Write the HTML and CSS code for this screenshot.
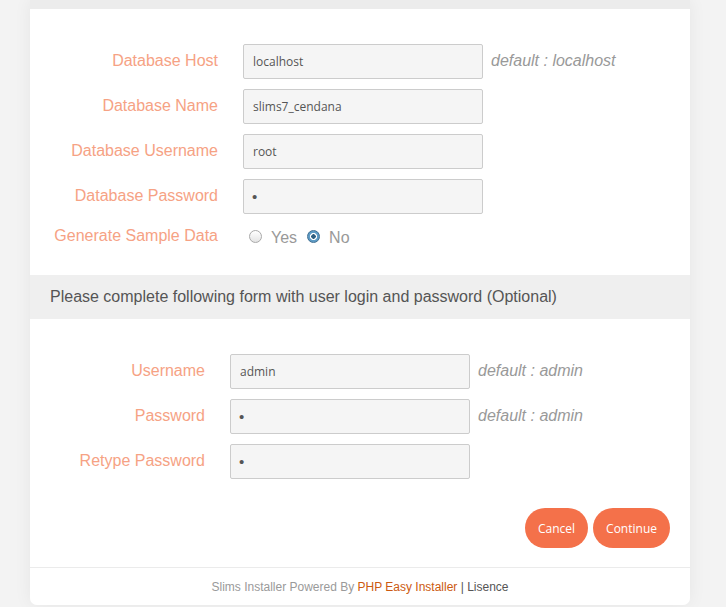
FILE: index.html
```html
<!DOCTYPE html>
<html lang="en">
<head>
<meta charset="utf-8">
<title>Slims Installer</title>
<link rel="stylesheet" href="styles.css">
</head>
<body>
<div class="wrap">
  <div class="top-band"></div>
  <div class="card">
    <div class="form form-db">
      <div class="row">
        <label class="lbl">Database Host</label>
        <input class="field" type="text" value="localhost">
        <span class="hint">default : localhost</span>
      </div>
      <div class="row">
        <label class="lbl">Database Name</label>
        <input class="field" type="text" value="slims7_cendana">
      </div>
      <div class="row">
        <label class="lbl">Database Username</label>
        <input class="field" type="text" value="root">
      </div>
      <div class="row">
        <label class="lbl">Database Password</label>
        <input class="field pw" type="password" value="x">
      </div>
      <div class="row row-radio">
        <label class="lbl">Generate Sample Data</label>
        <div class="radios">
          <span class="radio"></span><span class="rtext">Yes</span>
          <span class="radio checked"></span><span class="rtext">No</span>
        </div>
      </div>
    </div>

    <div class="section-bar">Please complete following form with user login and password (Optional)</div>

    <div class="form form-user">
      <div class="row">
        <label class="lbl">Username</label>
        <input class="field" type="text" value="admin">
        <span class="hint">default : admin</span>
      </div>
      <div class="row">
        <label class="lbl">Password</label>
        <input class="field pw" type="password" value="x">
        <span class="hint">default : admin</span>
      </div>
      <div class="row">
        <label class="lbl">Retype Password</label>
        <input class="field pw" type="password" value="x" autofocus>
      </div>
    </div>

    <div class="actions">
      <button class="btn" type="button">Cancel</button>
      <button class="btn" type="button">Continue</button>
    </div>

    <div class="footer">Slims Installer Powered By <span class="f-link">PHP Easy Installer</span> <span class="f-dark">| Lisence</span></div>
  </div>
</div>
</body>
</html>
```

FILE: styles.css
```css
* { box-sizing: border-box; }

html, body {
  margin: 0;
  padding: 0;
  background: #f3f3f3;
  font-family: "Liberation Sans", Arial, sans-serif;
  height: 607px;
  overflow: hidden;
}

.wrap {
  width: 660px;
  margin-left: 30px;
  box-shadow: 0 0 18px rgba(0, 0, 0, 0.06);
  border-radius: 0 0 7px 7px;
}

.top-band {
  height: 9px;
  background: #ececec;
}

.card {
  background: #fff;
  border-radius: 0 0 7px 7px;
  height: 596px;
  display: flex;
  flex-direction: column;
}

.form {
  display: flex;
  flex-direction: column;
  gap: 10px;
}

.form-db { padding-top: 35px; }
.form-user { padding-top: 35px; }

.row {
  display: flex;
  align-items: center;
  height: 35px;
}

.lbl {
  text-align: right;
  color: #f6a284;
  font-size: 16px;
  margin-right: 25px;
  flex: none;
  position: relative;
  top: -1px;
}

.form-db .lbl { width: 188px; }
.form-user .lbl { width: 175px; }

.field {
  width: 240px;
  height: 35px;
  border: 1px solid #cccccc;
  border-radius: 2px;
  background: #f5f5f5;
  font-family: "Open Sans", sans-serif;
  font-size: 12px;
  color: #555;
  padding: 0 9px;
  margin: 0;
  outline: none;
}

.field.pw {
  font-family: "Liberation Sans", Arial, sans-serif;
  font-size: 15px;
  padding-left: 8px;
}

.field:focus { outline: none; }

.hint {
  margin-left: 8px;
  font-style: italic;
  font-size: 16px;
  color: #999;
  position: relative;
  top: -1px;
}

.row-radio {
  height: 26px;
}

.radios {
  display: flex;
  align-items: center;
  padding-left: 6px;
}

.radio {
  width: 13px;
  height: 13px;
  border-radius: 50%;
  border: 1px solid #a9a9a9;
  background: linear-gradient(#ffffff, #e4e4e4);
  margin-right: 9px;
  position: relative;
  top: -1px;
}

.radio.checked {
  border: 1px solid #3f6f92;
  background: radial-gradient(circle, #2f5f80 0 2px, #ffffff 2.5px 3.3px, #5e9bc5 3.8px);
}

.rtext {
  font-size: 16px;
  color: #999;
  margin-right: 10px;
  position: relative;
  top: 1px;
}

.section-bar {
  margin-top: 25px;
  height: 44px;
  background: #efefef;
  padding-left: 20px;
  display: flex;
  align-items: center;
  font-size: 16px;
  color: #555;
}

.actions {
  display: flex;
  justify-content: flex-end;
  gap: 5px;
  padding-right: 20px;
  margin-top: 29px;
}

.btn {
  height: 40px;
  border: none;
  border-radius: 20px;
  background: #f4714a;
  color: #fff;
  font-family: "Open Sans", sans-serif;
  font-size: 12px;
  padding: 0 13px;
  margin: 0;
}

.footer {
  margin-top: auto;
  border-top: 1px solid #ebebeb;
  height: 38px;
  line-height: 39px;
  text-align: center;
  font-size: 12px;
  color: #9a9a9a;
}

.f-link { color: #cc5a10; }
.f-dark { color: #555; }
```
